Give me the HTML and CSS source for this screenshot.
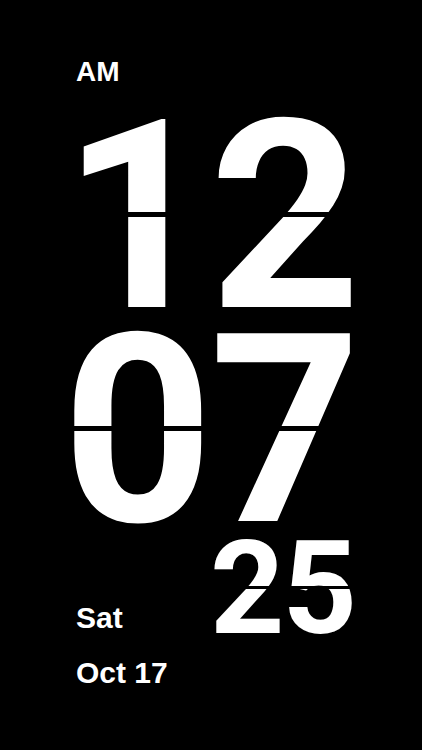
FILE: index.html
```html
<!DOCTYPE html>
<html lang="en">
<head>
<meta charset="utf-8">
<title>Flip Clock</title>
<link rel="stylesheet" href="styles.css">
</head>
<body>
  <main class="clock">
    <div class="meridiem">AM</div>
    <div class="big hours"><span class="digits">12</span><span class="split"></span></div>
    <div class="big minutes"><span class="digits">07</span><span class="split"></span></div>
    <div class="bottom">
      <div class="date">
        <div class="day">Sat</div>
        <div class="month">Oct 17</div>
      </div>
      <div class="seconds"><span class="digits">25</span><span class="split small"></span></div>
    </div>
  </main>
</body>
</html>
```

FILE: styles.css
```css
html, body {
  margin: 0;
  padding: 0;
  background: #000;
}
body {
  width: 422px;
  height: 750px;
  overflow: hidden;
  color: #fff;
  font-family: "Liberation Sans", Arial, sans-serif;
  font-weight: bold;
}
.clock {
  padding: 58px 0 0 76px;
  display: flex;
  flex-direction: column;
}
.meridiem {
  font-size: 28px;
  line-height: 28px;
}
.big {
  position: relative;
  font-family: Roboto, "Liberation Sans", sans-serif;
  font-size: 264px;
  line-height: 200px;
  margin-left: -14px;
  letter-spacing: -4px;
  width: max-content;
}
.hours {
  margin-top: 31px;
}
.minutes {
  margin-top: 14px;
}
.split {
  position: absolute;
  left: -10px;
  right: -10px;
  top: 95px;
  height: 5px;
  background: #000;
}
.bottom {
  display: flex;
  margin-top: 3px;
}
.date {
  width: 134px;
  padding-top: 56px;
  font-size: 30px;
  line-height: 55px;
}
.seconds {
  position: relative;
  font-family: Roboto, "Liberation Sans", sans-serif;
  font-size: 130px;
  line-height: 110px;
  letter-spacing: -2px;
  height: 110px;
}
.split.small {
  top: 52px;
  height: 3px;
}
```
